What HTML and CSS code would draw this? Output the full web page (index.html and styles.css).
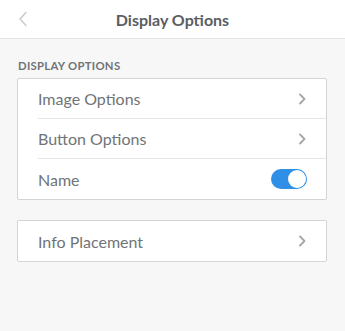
FILE: index.html
```html
<!DOCTYPE html>
<html>
<head>
<meta charset="utf-8">
<link rel="stylesheet" href="styles.css">
</head>
<body>
<header class="topbar">
  <svg class="back" width="10" height="16" viewBox="0 0 10 16"><path d="M8 1.5 L2 8 L8 14.5" fill="none" stroke="#c9cbcd" stroke-width="1.6" stroke-linecap="round" stroke-linejoin="round"/></svg>
  <h1 class="title">Display Options</h1>
</header>
<main class="content">
  <div class="section-label">DISPLAY OPTIONS</div>
  <div class="card">
    <div class="row"><span class="label">Image Options</span><svg class="chev" width="8" height="12" viewBox="0 0 8 12"><path d="M2 1.5 L6.5 6 L2 10.5" fill="none" stroke="#a3a7ab" stroke-width="1.8" stroke-linecap="round" stroke-linejoin="round"/></svg></div>
    <div class="row"><span class="label">Button Options</span><svg class="chev" width="8" height="12" viewBox="0 0 8 12"><path d="M2 1.5 L6.5 6 L2 10.5" fill="none" stroke="#a3a7ab" stroke-width="1.8" stroke-linecap="round" stroke-linejoin="round"/></svg></div>
    <div class="row"><span class="label">Name</span><span class="toggle"><span class="knob"></span></span></div>
  </div>
  <div class="card card-second">
    <div class="row"><span class="label">Info Placement</span><svg class="chev" width="8" height="12" viewBox="0 0 8 12"><path d="M2 1.5 L6.5 6 L2 10.5" fill="none" stroke="#a3a7ab" stroke-width="1.8" stroke-linecap="round" stroke-linejoin="round"/></svg></div>
  </div>
</main>
</body>
</html>
```
FILE: styles.css
```css
html, body {
  margin: 0;
  padding: 0;
}
body {
  background: #f7f7f7;
  font-family: Lato, "Open Sans", sans-serif;
  height: 331px;
}
.topbar {
  position: relative;
  height: 38px;
  background: #ffffff;
  border-bottom: 1px solid #e3e3e3;
  display: flex;
  align-items: center;
  justify-content: center;
}
.back {
  position: absolute;
  left: 18px;
  top: 11px;
}
.title {
  margin: 0;
  font-size: 16px;
  font-weight: 700;
  color: #5a5e62;
}
.content {
  padding: 20px 18px 0 17px;
}
.section-label {
  font-size: 11.3px;
  font-weight: 700;
  color: #707377;
  letter-spacing: 0.3px;
  padding-left: 1px;
  height: 19px;
  line-height: 14px;
}
.card {
  background: #ffffff;
  border: 1px solid #d3d5d7;
  border-radius: 2px;
}
.card-second {
  margin-top: 20px;
}
.row {
  height: 40px;
  margin-left: 20px;
  padding-right: 20px;
  display: flex;
  align-items: center;
  justify-content: space-between;
  box-sizing: border-box;
  border-bottom: 1px solid #e6e6e6;
}
.row:last-child {
  border-bottom: none;
}
.label {
  font-size: 16px;
  color: #707478;
}
.chev {
  display: block;
}
.toggle {
  width: 36px;
  height: 20px;
  border-radius: 10px;
  background: #2f8fe6;
  position: relative;
  margin-right: -1px;
}
.knob {
  position: absolute;
  right: 1px;
  top: 1px;
  width: 18px;
  height: 18px;
  border-radius: 50%;
  background: #ffffff;
  box-sizing: border-box;
}
```
